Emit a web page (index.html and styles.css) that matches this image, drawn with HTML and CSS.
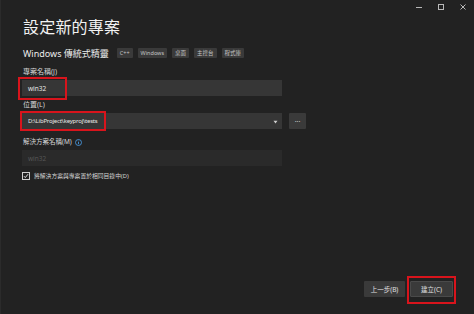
FILE: index.html
```html
<!DOCTYPE html>
<html lang="zh-Hant">

<head>
    <meta charset="UTF-8">
    <meta name="viewport" content="width=device-width, initial-scale=1.0">
    <title>設定新的專案</title>
    <link rel="stylesheet" href="styles.css">
</head>

<body>
    <div class="dialog">
        <div class="titlebar">
            <span class="win-btn">
                <svg width="8" height="8" viewBox="0 0 8 8"><path d="M1 4.5h6" stroke="#b8b8b8" stroke-width="1"/></svg>
            </span>
            <span class="win-btn">
                <svg width="8" height="8" viewBox="0 0 8 8"><rect x="1.5" y="1.5" width="5" height="5" fill="none" stroke="#b8b8b8" stroke-width="1"/></svg>
            </span>
            <span class="win-btn">
                <svg width="8" height="8" viewBox="0 0 8 8"><path d="M1.5 1.5l5 5M6.5 1.5l-5 5" stroke="#b8b8b8" stroke-width="1"/></svg>
            </span>
        </div>

        <div class="content">
            <h1>設定新的專案</h1>

            <div class="template-row">
                <span class="template-name">Windows 傳統式精靈</span>
                <span class="tag">C++</span>
                <span class="tag">Windows</span>
                <span class="tag">桌面</span>
                <span class="tag">主控台</span>
                <span class="tag">程式庫</span>
            </div>

            <div class="label label-first">專案名稱(J)</div>
            <div class="field-row">
                <div class="field">
                    <span>win32</span>
                    <span class="mark mark-name"></span>
                </div>
            </div>

            <div class="label">位置(L)</div>
            <div class="field-row">
                <div class="field">
                    <span class="path">D:\LibProject\keyproj\tests</span>
                    <svg class="caret" width="5" height="4" viewBox="0 0 5 4"><path d="M0.5 0.8h4L2.5 3.4z" fill="#d0d0d0"/></svg>
                    <span class="mark mark-location"></span>
                </div>
                <button class="browse">...</button>
            </div>

            <div class="label label-info">
                解決方案名稱(M)
                <svg width="7" height="7" viewBox="0 0 7 7"><circle cx="3.5" cy="3.5" r="3" fill="none" stroke="#4ba3f0" stroke-width="0.8"/><path d="M3.5 3v2.2" stroke="#4ba3f0" stroke-width="0.8"/><circle cx="3.5" cy="2" r="0.45" fill="#4ba3f0"/></svg>
            </div>
            <div class="field-row">
                <div class="field disabled">
                    <span>win32</span>
                </div>
            </div>

            <label class="check-row">
                <span class="checkbox">
                    <svg width="6" height="6" viewBox="0 0 6 6"><path d="M1 3.2l1.3 1.4L5 1.2" fill="none" stroke="#f0f0f0" stroke-width="0.9"/></svg>
                </span>
                將解決方案與專案置於相同目錄中(D)
            </label>
        </div>

        <div class="footer">
            <button class="btn">上一步(B)</button>
            <button class="btn btn-create">建立(C)<span class="mark mark-create"></span></button>
        </div>
    </div>
</body>

</html>
```

FILE: styles.css
```css
body {
    margin: 0;
    padding: 0;
    background-color: #222222;
    color: #e6e6e6;
    font-family: "Noto Sans", "Noto Sans CJK TC", sans-serif;
}

.dialog {
    display: flex;
    flex-direction: column;
    height: 314px;
    box-sizing: border-box;
    border-left: 1px solid #2b2b2b;
}

.titlebar {
    display: flex;
    justify-content: flex-end;
    height: 14px;
}

.win-btn {
    display: flex;
    align-items: center;
    justify-content: center;
    width: 22px;
    height: 14px;
}

.content {
    padding-left: 21px;
}

h1 {
    margin: 3px 0 0 1px;
    font-size: 16px;
    line-height: 20px;
    font-weight: normal;
    color: #f2f2f2;
    letter-spacing: 0.2px;
}

.template-row {
    display: flex;
    align-items: center;
    height: 16px;
    margin-top: 8px;
    padding-left: 1px;
}

.template-name {
    font-size: 9px;
    color: #ececec;
    margin-right: 8px;
}

.tag {
    display: flex;
    align-items: center;
    height: 10px;
    padding: 0 3px;
    margin-right: 5px;
    font-size: 5.5px;
    color: #c4c4c4;
    background-color: #3a3a3a;
    border-radius: 1px;
}

.label {
    font-size: 7px;
    line-height: 10px;
    color: #d6d6d6;
    margin-top: 4px;
    padding-left: 1px;
}

.label-first {
    margin-top: 6px;
}

.label-info {
    display: flex;
    align-items: center;
    gap: 3px;
    margin-top: 8px;
    font-size: 6.5px;
}

.field-row {
    display: flex;
    align-items: center;
    gap: 7px;
    margin-top: 3px;
}

.field {
    position: relative;
    display: flex;
    align-items: center;
    justify-content: space-between;
    width: 260px;
    height: 16px;
    box-sizing: border-box;
    padding: 0 4px 0 6px;
    background-color: #363636;
    font-size: 6.5px;
    color: #e8e8e8;
}

.field .path {
    font-size: 6px;
    letter-spacing: -0.2px;
}

.field.disabled {
    background-color: #2a2a2a;
    color: #565656;
}

.caret {
    margin-top: 1px;
}

.browse {
    width: 17px;
    height: 16px;
    padding: 0 0 3px;
    border: none;
    border-radius: 1px;
    background-color: #3a3a3a;
    color: #c8c8c8;
    font-size: 7px;
    line-height: 7px;
    font-family: inherit;
}

.check-row {
    display: flex;
    align-items: center;
    gap: 4px;
    margin-top: 5px;
    font-size: 5.8px;
    line-height: 10px;
    color: #d6d6d6;
}

.checkbox {
    display: flex;
    align-items: center;
    justify-content: center;
    width: 8px;
    height: 8px;
    box-sizing: border-box;
    border: 1px solid #cfcfcf;
}

.footer {
    display: flex;
    justify-content: flex-end;
    gap: 5px;
    margin-top: auto;
    padding: 0 21px 17px 0;
}

.btn {
    position: relative;
    height: 16px;
    padding: 0;
    width: 41px;
    border: none;
    border-radius: 1px;
    background-color: #3a3a3a;
    color: #e0e0e0;
    font-size: 6.5px;
    font-family: inherit;
}

.btn-create {
    width: 43px;
    border: 1px solid #4a4a4a;
}

/* red annotation boxes drawn over the screenshot */
.mark {
    position: absolute;
    border: 2.5px solid #d8141c;
    box-sizing: border-box;
    pointer-events: none;
}

.mark-name {
    left: -4px;
    top: -3px;
    width: 49px;
    height: 23px;
}

.mark-location {
    left: -2px;
    top: -2px;
    width: 86px;
    height: 20px;
}

.mark-create {
    left: -4px;
    top: -6px;
    width: 49px;
    height: 28px;
}
```
